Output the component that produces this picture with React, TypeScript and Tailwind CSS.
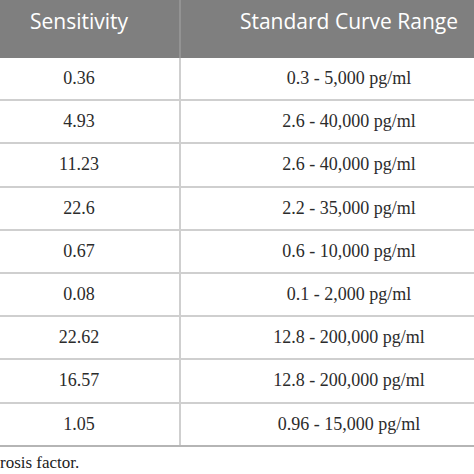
const rows: [string, string][] = [
  ["0.36", "0.3 - 5,000 pg/ml"],
  ["4.93", "2.6 - 40,000 pg/ml"],
  ["11.23", "2.6 - 40,000 pg/ml"],
  ["22.6", "2.2 - 35,000 pg/ml"],
  ["0.67", "0.6 - 10,000 pg/ml"],
  ["0.08", "0.1 - 2,000 pg/ml"],
  ["22.62", "12.8 - 200,000 pg/ml"],
  ["16.57", "12.8 - 200,000 pg/ml"],
  ["1.05", "0.96 - 15,000 pg/ml"],
];

export default function App() {
  return (
    <div className="w-[474px] h-[474px] overflow-hidden bg-white">
      <div className="ml-[-21px] w-[538px]">
        {/* header */}
        <div className="flex h-[58px] bg-[#7f7f7f] text-white text-[21px] font-['Open_Sans',sans-serif]">
          <div className="w-[202px] flex items-center justify-center pb-[14px] border-r-2 border-[#939393]">
            Sensitivity
          </div>
          <div className="flex-1 flex items-center justify-center pb-[14px]">
            Standard Curve Range
          </div>
        </div>

        {/* body */}
        <div className="font-['Liberation_Serif',serif] text-[18px] text-[#2b2b2b]">
          {rows.map(([s, r], i) => (
            <div
              key={i}
              className={
                "flex h-[43.2px] border-b-2 " +
                (i === rows.length - 1 ? "border-[#b5b5b5]" : "border-[#cfcfcf]")
              }
            >
              <div className="w-[202px] flex items-center justify-center border-r-2 border-[#cfcfcf]">
                {s}
              </div>
              <div className="flex-1 flex items-center justify-center">{r}</div>
            </div>
          ))}
        </div>
      </div>

      <div className="mt-[6px] font-['Liberation_Serif',serif] text-[17px] text-[#222] leading-5">
        rosis factor.
      </div>
    </div>
  );
}
